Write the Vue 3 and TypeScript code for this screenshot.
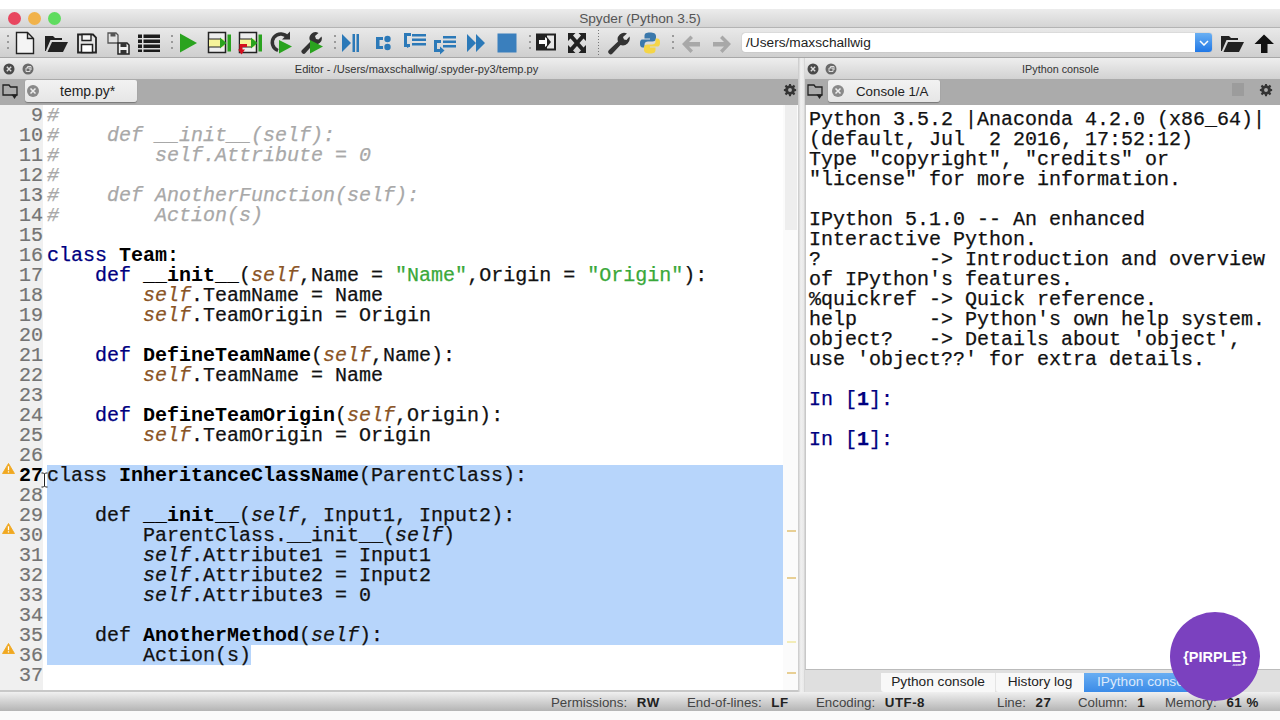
<script setup lang="ts">
type Tok = [string, string?]
const kw = 'kw', fn = 'fn', sf = 'sf', st = 'st', cm = 'cm'
const raw: Tok[][] = [
  [['#', cm]],
  [['#    def __init__(self):', cm]],
  [['#        self.Attribute = 0', cm]],
  [['#', cm]],
  [['#    def AnotherFunction(self):', cm]],
  [['#        Action(s)', cm]],
  [],
  [['class', kw], [' '], ['Team', fn], [':', fn]],
  [['    '], ['def', kw], [' '], ['__init__', fn], ['('], ['self', sf], [',Name = '], ['"Name"', st], [',Origin = '], ['"Origin"', st], ['):']],
  [['        '], ['self', sf], ['.TeamName = Name']],
  [['        '], ['self', sf], ['.TeamOrigin = Origin']],
  [],
  [['    '], ['def', kw], [' '], ['DefineTeamName', fn], ['('], ['self', sf], [',Name):']],
  [['        '], ['self', sf], ['.TeamName = Name']],
  [],
  [['    '], ['def', kw], [' '], ['DefineTeamOrigin', fn], ['('], ['self', sf], [',Origin):']],
  [['        '], ['self', sf], ['.TeamOrigin = Origin']],
  [],
  [['class', 'k2'], [' '], ['InheritanceClassName', fn], ['(ParentClass):']],
  [],
  [['    '], ['def', 'k2'], [' '], ['__init__', fn], ['('], ['self', 's2'], [', Input1, Input2):']],
  [['        ParentClass.__init__('], ['self', 's2'], [')']],
  [['        '], ['self', 's2'], ['.Attribute1 = Input1']],
  [['        '], ['self', 's2'], ['.Attribute2 = Input2']],
  [['        '], ['self', 's2'], ['.Attribute3 = 0']],
  [],
  [['    '], ['def', 'k2'], [' '], ['AnotherMethod', fn], ['('], ['self', 's2'], ['):']],
  [['        Action(s)']],
  [],
]
const rows = raw.map((toks, i) => {
  const n = i + 9
  return { n, toks, sel: n >= 27 && n <= 35, part: n === 36, cur: n === 27, warn: n === 27 || n === 30 || n === 36 }
})
const consoleText = `Python 3.5.2 |Anaconda 4.2.0 (x86_64)|
(default, Jul  2 2016, 17:52:12)
Type "copyright", "credits" or
"license" for more information.

IPython 5.1.0 -- An enhanced
Interactive Python.
?         -> Introduction and overview
of IPython's features.
%quickref -> Quick reference.
help      -> Python's own help system.
object?   -> Details about 'object',
use 'object??' for extra details.`
</script>

<template>
  <div class="win">
    <div class="topgap"></div>
    <div class="titlebar">
      <span class="light red"></span><span class="light yellow"></span><span class="light green"></span>
      <span class="wintitle">Spyder (Python 3.5)</span>
    </div>
    <div class="toolbar">
      <span class="grip g0"></span>
      <svg class="ic" viewBox="0 0 24 24"><path d="M3.500 1.500h11l6 6v15h-17z M14.500 1.500v6h6" fill="#f4f4f4" stroke="#222" stroke-width="1.400"/></svg>
      <svg class="ic" viewBox="0 0 24 24"><path d="M1 20V5h8l2 2h7v2H6.500L1.800 20z" fill="#222"/><path d="M3.500 21 8 11h16l-5 10z" fill="#222"/></svg>
      <svg class="ic" viewBox="0 0 24 24"><path d="M3 3.500h15l3 3v15H3z" fill="#e4e4e4" stroke="#222" stroke-width="1.800"/><path d="M7 3.500h9v6H7z" fill="#f6f6f6" stroke="#222" stroke-width="1.400"/><path d="M6.500 13.500h11v8h-11z" fill="#fff" stroke="#222" stroke-width="1.500"/></svg>
      <svg class="ic" viewBox="0 0 24 24"><path d="M2 2h8l2 2v8H2z" fill="#e4e4e4" stroke="#555" stroke-width="1.300"/><path d="M4.500 2h5v3.500h-5z" fill="#555"/><path d="M12 12h9l2 2v9H12z" fill="#eee" stroke="#222" stroke-width="1.500"/><path d="M14.500 12h6v4h-6zM14.500 19h6v4h-6z" fill="#333"/></svg>
      <svg class="ic" viewBox="0 0 24 24"><path d="M1 3.500h4v3.500H1zM6.500 3.500H23v3.500H6.500zM1 8.500h4V12H1zM6.500 8.500H23V12H6.500zM1 13.500h4V17H1zM6.500 13.500H23V17H6.500zM1 18.500h4V21H1zM6.500 18.500H23V21H6.500z" fill="#1c1c1c"/></svg>
      <span class="grip g1"></span>
      <svg class="ic" viewBox="0 0 24 24"><path d="M4 2.500 21 12 4 21.500z" fill="#2aa31f"/></svg>
      <svg class="ic" viewBox="0 0 24 24"><path d="M1.500 1.500h17v20h-17z" fill="#eee" stroke="#222" stroke-width="1.500"/><path d="M2 8h15v8H2z" fill="#f6f39a"/><path d="M1.500 8h12M1.500 16h12" stroke="#222" stroke-width="1.200"/><path d="M13 6.500 19.500 12 13 17.500zM20.500 3.500H24v17h-3.500z" fill="#2aa31f"/></svg>
      <svg class="ic" viewBox="0 0 24 24"><path d="M1.500 1.500h17v20h-17z" fill="#eee" stroke="#222" stroke-width="1.500"/><path d="M2 8h15v8H2z" fill="#f6f39a"/><path d="M1.500 8h12M1.500 16h12" stroke="#222" stroke-width="1.200"/><path d="M13 6.500 19.500 12 13 17.500zM20.500 3.500H24v17h-3.500z" fill="#2aa31f"/><path d="M9 14.500H3v5" fill="none" stroke="#d40f1e" stroke-width="3"/><path d="M0 18.500h7l-3.500 5z" fill="#d40f1e"/></svg>
      <svg class="ic" viewBox="0 0 24 24"><path d="M19 7A8.500 8.500 0 1 0 9 19.500" fill="none" stroke="#333" stroke-width="3.400"/><path d="M21 .5v8h-8z" fill="#333"/><path d="M10 9 23 15.500 10 22.500z" fill="#2aa31f"/></svg>
      <svg class="ic" viewBox="0 0 24 24"><path d="M2 19 10.500 10.500A6 6 0 0 1 18.500 2l-3.500 3 1 3 2.500.5 3-3a6 6 0 0 1-8 7.500L5.500 22a2.200 2.200 0 0 1-3.500-3z" fill="#333"/><path d="M10 9 23 15.500 10 22.500z" fill="#2aa31f"/></svg>
      <span class="grip g2"></span>
      <svg class="ic" viewBox="0 0 24 24"><path d="M5 3 14 12 5 21z" fill="#2b79b8"/><path d="M15.500 3H18v18h-2.500zM19.500 3H22v18h-2.500z" fill="#2b79b8"/></svg>
      <svg class="ic nudge" viewBox="0 0 24 24"><path d="M5 6h7v3H8.500v6H12v3H5z" fill="#2b79b8"/><circle cx="16.500" cy="8" r="3.200" fill="#2b79b8"/><circle cx="16.500" cy="16" r="3.200" fill="#2b79b8"/></svg>
      <svg class="ic" viewBox="0 0 24 24"><path d="M2 2h7v3H5v8h3v3H2z" fill="#2b79b8"/><path d="M10 3h14v2.500H10zM10 7.500h14V10H10zM10 12h14v2.500H10z" fill="#2b79b8"/><path d="M5 14v3l3-1.500z" fill="#2b79b8"/></svg>
      <svg class="ic" viewBox="0 0 24 24"><path d="M10 5h13v2.500H10zM10 9.500h13V12H10zM10 14h13v2.500H10z" fill="#2b79b8"/><path d="M1 9h7v3H4v6h3v-2.500l4.500 4-4.500 4V21H1z" fill="#2b79b8"/></svg>
      <svg class="ic" viewBox="0 0 24 24"><path d="M3 3 12 12 3 21zM12 3 21 12 12 21z" fill="#2b79b8"/></svg>
      <svg class="ic" viewBox="0 0 24 24"><path d="M2.500 2.500h19v19h-19z" fill="#3a7fbd"/></svg>
      <span class="grip g3"></span>
      <svg class="ic" viewBox="0 0 24 24"><path d="M2 2.500h20v17H2z" fill="#222"/><path d="M13 4.500h7v13h-7z" fill="#e8e8e8"/><path d="M5 9h6V6l6 5-6 5v-3H5z" fill="#fff"/><path d="M13 6l4 5-4 5z" fill="#222"/></svg>
      <svg class="ic" viewBox="0 0 24 24"><path d="M3 2h7.500L8 4.500 12 9l4-4.500L13.500 2H21v8l-2.500-2.500L14.500 12l4 4.500L21 14v8h-7.500l2.500-2.500L12 15l-4 4.500 2.500 2.500H3v-8l2.500 2.500 4-4.500-4-4.500L3 10z" fill="#222"/></svg>
      <span class="vsep"></span>
      <svg class="ic" viewBox="0 0 24 24"><path d="M2 19 11 10.500A6.500 6.500 0 0 1 20 2.500l-4 3.500 1 2.500 2.500.5 3-3.500a7 7 0 0 1-9 8.500L5.500 22.500a2.400 2.400 0 0 1-3.500-3.500z" fill="#333"/></svg>
      <svg class="ic" viewBox="0 0 24 24"><path d="M12 1.500c-4 0-5.500 1-5.500 3.500v2.500H12v1H4.500C2 8.500 2 11 2 13s1 3.500 2.500 3.500h2v-3c0-2 1.500-3 3.500-3h4.500c2 0 3.500-1 3.500-3V5c0-2.500-2.500-3.500-6-3.500z" fill="#3b78ab"/><path d="M12 22.500c4 0 5.500-1 5.500-3.500v-2.500H12v-1h7.500c2.500 0 2.500-2.500 2.500-4.500s-1-3.500-2.500-3.500h-2v3c0 2-1.500 3-3.500 3H9.500c-2 0-3.500 1-3.500 3V19c0 2.500 2.500 3.500 6 3.500z" fill="#f5d547"/></svg>
      <span class="grip g4"></span>
      <svg class="ic" viewBox="0 0 24 24"><path d="M3 13 11.500 4.500 14 7l-4 4h11v4.500H10l4 4L11.500 22z" fill="#a8a8a8"/></svg>
      <svg class="ic" viewBox="0 0 24 24"><path d="M21 13 12.500 4.500 10 7l4 4H3v4.500h11l-4 4 2.500 2.500z" fill="#a8a8a8"/></svg>
      <div class="pathbox"><span class="pathtxt">/Users/maxschallwig</span><span class="combo"><svg width="10" height="6" viewBox="0 0 10 6"><path d="M1 1l4 4 4-4" fill="none" stroke="#fff" stroke-width="1.500"/></svg></span></div>
      <svg class="ic folder2" viewBox="0 0 24 24"><path d="M1 20V5h8l2 2h7v2H6.500L1.800 20z" fill="#222"/><path d="M3.500 21 8 11h16l-5 10z" fill="#222"/></svg>
      <svg class="ic up" viewBox="0 0 24 24"><path d="M12 3.500 22 13h-6.500v9h-6.500v-9H2.500z" fill="#111"/></svg>
    </div>

    <div class="panes">
      <section class="pane left">
        <header class="dock">
          <svg class="dk" viewBox="0 0 12 12"><circle cx="6" cy="6" r="5.500" fill="#4a4a4a"/><path d="M3.800 3.800l4.400 4.400M8.200 3.800 3.800 8.200" stroke="#ddd" stroke-width="1.400"/></svg>
          <svg class="dk" viewBox="0 0 12 12"><circle cx="6" cy="6" r="5.500" fill="#6a6a6a"/><path d="M4 5h4v3.500H4z M5.500 5V3.500H9V7" fill="none" stroke="#ddd"/></svg>
          <span class="docktitle">Editor - /Users/maxschallwig/.spyder-py3/temp.py</span>
        </header>
        <div class="tabs">
          <svg class="browse" viewBox="0 0 18 18"><path d="M1 3h6l1.500 2H15v8H1z" fill="none" stroke="#222" stroke-width="1.300"/><path d="M9.500 12.500h6L12.500 17z" fill="#222"/></svg>
          <div class="tab edtab">
            <svg class="tabx" viewBox="0 0 12 12"><circle cx="6" cy="6" r="6" fill="#8a8a8a"/><path d="M3.500 3.500l5 5M8.500 3.500l-5 5" stroke="#eee" stroke-width="1.500"/></svg>
            <span class="tablabel">temp.py*</span>
          </div>
          <svg class="gear" viewBox="0 0 16 16"><path d="M7 1h2l.4 1.800 1.300.5L12.300 2l1.700 1.700-1.200 1.600.5 1.300 1.700.4v2l-1.700.4-.5 1.300 1.200 1.500-1.700 1.700-1.600-1.200-1.300.5L9 15H7l-.4-1.800-1.300-.5L3.700 14 2 12.300l1.200-1.500-.5-1.300L1 9V7l1.700-.4.500-1.300L2 3.700 3.700 2l1.600 1.300 1.300-.5z" fill="#333"/><circle cx="8" cy="8" r="2.200" fill="#aaa"/></svg>
        </div>
        <div class="editor">
          <div class="gutter">
            <div v-for="r in rows" :key="r.n" class="num" :class="{ cur: r.cur }">
              <svg v-if="r.warn" class="warn" viewBox="0 0 14 12"><path d="M7 .5 13.500 11.500H.5z" fill="#f0a821" stroke="#f0a821" stroke-linejoin="round"/><path d="M6.300 3.500h1.400v4.500H6.300zM6.300 9h1.400v1.300H6.300z" fill="#fff"/></svg>
              {{ r.n }}
            </div>
          </div>
          <div class="code">
            <div v-for="r in rows" :key="r.n" class="line" :class="{ sel: r.sel }">
              <span :class="{ partsel: r.part }"><span v-for="(t, i) in r.toks" :key="i" :class="t[1]">{{ t[0] }}</span></span>
            </div>
            <svg class="ibeam" viewBox="0 0 9 16"><path d="M1.500 1h2l1 1 1-1h2M4.500 2v12M1.500 15h2l1-1 1 1h2" fill="none" stroke="#222"/></svg>
          </div>
          <div class="marks">
            <div class="marktop"></div>
            <span class="mark m1"></span>
            <span class="mark m2"></span>
            <span class="mark m3"></span>
            <span class="mark m4"></span>
          </div>
        </div>
      </section>
      <div class="split"></div>
      <section class="pane right">
        <header class="dock">
          <svg class="dk" viewBox="0 0 12 12"><circle cx="6" cy="6" r="5.500" fill="#4a4a4a"/><path d="M3.800 3.800l4.400 4.400M8.200 3.800 3.800 8.200" stroke="#ddd" stroke-width="1.400"/></svg>
          <svg class="dk" viewBox="0 0 12 12"><circle cx="6" cy="6" r="5.500" fill="#6a6a6a"/><path d="M4 5h4v3.500H4z M5.500 5V3.500H9V7" fill="none" stroke="#ddd"/></svg>
          <span class="docktitle">IPython console</span>
        </header>
        <div class="tabs">
          <svg class="browse" viewBox="0 0 18 18"><path d="M1 3h6l1.500 2H15v8H1z" fill="none" stroke="#222" stroke-width="1.300"/><path d="M9.500 12.500h6L12.500 17z" fill="#222"/></svg>
          <div class="tab contab">
            <svg class="tabx" viewBox="0 0 12 12"><circle cx="6" cy="6" r="6" fill="#8a8a8a"/><path d="M3.500 3.500l5 5M8.500 3.500l-5 5" stroke="#eee" stroke-width="1.500"/></svg>
            <span class="tablabel">Console 1/A</span>
          </div>
          <span class="stop"></span>
          <svg class="gear g-con" viewBox="0 0 16 16"><path d="M7 1h2l.4 1.800 1.300.5L12.300 2l1.700 1.700-1.200 1.600.5 1.300 1.700.4v2l-1.700.4-.5 1.300 1.200 1.500-1.700 1.700-1.600-1.200-1.300.5L9 15H7l-.4-1.800-1.300-.5L3.700 14 2 12.300l1.200-1.500-.5-1.300L1 9V7l1.700-.4.500-1.300L2 3.700 3.700 2l1.600 1.300 1.300-.5z" fill="#333"/><circle cx="8" cy="8" r="2.200" fill="#aaa"/></svg>
        </div>
        <div class="console">
          <pre class="ctext">{{ consoleText }}</pre>
          <div class="prompt">In [<b>1</b>]:</div>
          <div class="prompt">In [<b>1</b>]:</div>
        </div>
        <div class="bottomtabs">
          <span class="btab">Python console</span>
          <span class="btab hist">History log</span>
          <span class="btab active">IPython console</span>
        </div>
      </section>
    </div>

    <footer class="status">
      <span class="st1">Permissions: <b>RW</b></span>
      <span class="st2">End-of-lines: <b>LF</b></span>
      <span class="st3">Encoding: <b>UTF-8</b></span>
      <span class="st4">Line: <b>27</b></span>
      <span class="st5">Column: <b>1</b></span>
      <span class="st6">Memory: <b>61 %</b></span>
    </footer>
    <div class="botgap"></div>

    <div class="badge"><span class="brand">{PIRPLE}</span><span class="dotcom">.com</span></div>
  </div>
</template>

<style>
html, body { margin: 0; background: #fff; }
</style>

<style scoped>
.win {
  position: relative;
  width: 1280px;
  height: 720px;
  overflow: hidden;
  display: flex;
  flex-direction: column;
  font-family: "Liberation Sans", Arial, sans-serif;
  background: #fff;
}
.topgap { height: 9px; background: #fff; }
.titlebar {
  height: 18px;
  display: flex;
  align-items: center;
  position: relative;
  padding-left: 8px;
  gap: 7px;
  background: linear-gradient(#ececec, #d4d4d4);
  border-bottom: 1px solid #b4b4b4;
}
.light { width: 13px; height: 13px; border-radius: 50%; }
.red { background: #e8465f; }
.yellow { background: #f1b24a; }
.green { background: #5fdc5f; }
.wintitle { position: absolute; left: 0; right: 0; text-align: center; font-size: 13.700px; color: #555; }
.toolbar {
  height: 29px;
  display: flex;
  align-items: center;
  gap: 7px;
  padding-left: 7px;
  background: linear-gradient(#e9e9e9, #cfcfcf);
  border-bottom: 1px solid #a8a8a8;
}
.ic { width: 24px; height: 24px; flex: none; }
.nudge { margin-left: 3px; }
.grip { width: 2px; height: 16px; flex: none; background: repeating-linear-gradient(#9a9a9a 0 2px, transparent 2px 6px); }
.g0 { margin-right: -3px; }
.g1 { margin: 0 -4px 0 3px; }
.g2 { margin: 0 -6px 0 3px; }
.g3 { margin: 0 -4px 0 3px; }
.g4 { margin: 0 -2px 0 3px; }
.vsep { width: 1px; height: 26px; flex: none; margin: 0 1px 0 2px; background: repeating-linear-gradient(#777 0 1px, transparent 1px 3px); }
.pathbox {
  width: 470px;
  height: 19px;
  margin-left: 1px;
  flex: none;
  display: flex;
  justify-content: space-between;
  background: #fff;
  border-radius: 3px;
  box-shadow: 0 0 1px #888;
}
.pathtxt { font-size: 13.700px; line-height: 19px; color: #222; padding-left: 4px; }
.combo {
  width: 17px;
  display: flex;
  align-items: center;
  justify-content: center;
  background: linear-gradient(#6ab0f3, #1f77e6);
  border-radius: 0 3px 3px 0;
}
.folder2 { margin-left: 1px; }
.up { margin-left: 1px; }
.panes { flex: 1; display: flex; min-height: 0; background: #e4e4e4; }
.pane { display: flex; flex-direction: column; min-width: 0; }
.left { width: 798px; }
.split { width: 7px; background: linear-gradient(90deg, #c8c8c8, #f0f0f0 40%, #e8e8e8 85%, #c8c8c8); }
.right { flex: 1; }
.dock {
  height: 21px;
  flex: none;
  position: relative;
  display: flex;
  align-items: center;
  gap: 7px;
  padding-left: 3px;
  background: linear-gradient(#eeeeee, #d2d2d2);
  box-sizing: border-box;
}
.right .dock { padding-left: 2px; gap: 6px; }
.dk { width: 12px; height: 12px; flex: none; }
.docktitle { position: absolute; left: 0; right: 0; text-align: center; font-size: 11.100px; color: #333; }
.left .docktitle { padding-left: 35px; }
.right .docktitle { padding-left: 36px; font-size: 10.800px; }
.tabs {
  height: 26px;
  flex: none;
  position: relative;
  display: flex;
  align-items: flex-start;
  background: #ababab;
}
.browse { width: 18px; height: 18px; margin: 3px 0 0 2px; flex: none; }
.tab {
  height: 22px;
  margin-left: 5px;
  margin-top: 1px;
  display: flex;
  align-items: center;
  box-sizing: border-box;
  background: linear-gradient(#f2f2f2, #e6e6e6);
  border-radius: 2px 2px 3px 3px;
  box-shadow: 0 1px 1px #777;
  color: #222;
}
.edtab { width: 112px; padding-left: 2px; font-size: 14px; }
.contab { width: 112px; margin-left: 3px; padding-left: 4px; font-size: 13.300px; }
.tabx { width: 12px; height: 12px; flex: none; }
.edtab .tablabel { margin-left: 21px; }
.contab .tablabel { margin-left: 12px; }
.gear { width: 14px; height: 14px; position: absolute; right: 1px; top: 4px; }
.g-con { right: 7px; }
.stop { position: absolute; right: 36px; top: 4px; width: 12px; height: 13px; background: #9c9c9c; }
.editor { flex: 1; display: flex; min-height: 0; background: #fff; border-bottom: 2px solid #c8c8c8; }
.gutter { width: 43px; flex: none; background: #f0f0f0; }
.num {
  height: 20px;
  position: relative;
  text-align: right;
  font: 20px/22px "Liberation Mono", monospace;
  color: #747474;
  -webkit-text-stroke: .2px #747474;
}
.num.cur { color: #000; font-weight: 700; -webkit-text-stroke: 0; }
.warn { position: absolute; left: 2px; top: -2px; width: 13px; height: 11px; }
.code {
  position: relative;
  width: 740px;
  flex: none;
  background: #fff;
}
.line {
  height: 20px;
  padding-left: 4px;
  font: 20px/22px "Liberation Mono", monospace;
  color: #111;
  white-space: pre;
  -webkit-text-stroke: .25px currentColor;
}
.line.sel { background: linear-gradient(#b7d5fb, #b7d5fb) 4px 0 / 100% 100% no-repeat; }
.partsel { background: #b7d5fb; display: inline-block; height: 20px; }
.kw { color: #00007f; }
.k2 { color: #111; }
.fn { color: #000; font-weight: 700; -webkit-text-stroke: 0; }
.sf { color: #8a5425; font-style: italic; }
.s2 { color: #111; font-style: italic; }
.st { color: #3aa83a; }
.cm { color: #a8a8a8; font-style: italic; }
.ibeam { position: absolute; left: -3px; top: 367px; width: 9px; height: 16px; }
.marks { flex: 1; position: relative; background: #fbfbfb; }
.marktop { height: 125px; background: #eeeeee; margin-left: 2px; margin-right: 1px; }
.mark { position: absolute; left: 4px; width: 9px; height: 2px; }
.m1 { top: 425px; background: #e8cf94; }
.m2 { top: 472px; background: #e8cf94; }
.m3 { top: 536px; background: #f3edb8; }
.m4 { top: 567px; background: #e8cf94; }
.console {
  flex: 1;
  min-height: 0;
  padding: 5px 0 0 3px;
  box-sizing: border-box;
  background: #fff;
  border-left: 1px solid #c8c8c8;
  border-bottom: 1px solid #bbb;
  font: 20px/20px "Liberation Mono", monospace;
  color: #111;
  -webkit-text-stroke: .25px currentColor;
}
.ctext { margin: 0; font: inherit; }
.prompt { color: #00007f; margin-top: 20px; }
.prompt b { font-weight: 700; }
.bottomtabs {
  height: 22px;
  flex: none;
  box-sizing: border-box;
  display: flex;
  padding: 3px 0 0 76px;
  background: #dfdfdf;
}
.btab {
  width: 114px;
  height: 19px;
  box-sizing: border-box;
  background: #f8f8f8;
  font-size: 13.700px;
  line-height: 18px;
  text-align: center;
  color: #222;
  border-radius: 0 0 0 3px;
}
.hist { width: 89px; border-left: 1px solid #e4e4e4; }
.active {
  width: 150px;
  text-align: left;
  padding-left: 13px;
  color: #dce9fb;
  background: linear-gradient(#69aef2, #3b8be8);
  border-radius: 0;
}
.status {
  height: 19px;
  flex: none;
  box-sizing: border-box;
  padding-top: 2px;
  display: flex;
  align-items: center;
  font-size: 13.300px;
  color: #444;
  background: linear-gradient(#f0f0f0, #b4b4b4);
}
.status b { color: #222; margin-left: 6px; font-weight: 700; letter-spacing: .5px; }
.status span { white-space: nowrap; flex: none; }
.st1 { margin-left: 551px; width: 136px; }
.st2 { width: 129px; }
.st3 { width: 181px; }
.st4 { width: 81px; }
.st5 { width: 87px; }
.botgap { height: 9px; flex: none; background: #fafafa; }
.badge {
  position: absolute;
  left: 1170px;
  top: 612px;
  width: 90px;
  height: 89px;
  border-radius: 50%;
  background: #7b41bf;
  display: flex;
  align-items: center;
  justify-content: center;
  color: #fff;
}
.brand { font-weight: 700; font-size: 14.500px; }
.dotcom { position: absolute; left: 62px; top: 50px; font-size: 4px; font-weight: 700; }
</style>
